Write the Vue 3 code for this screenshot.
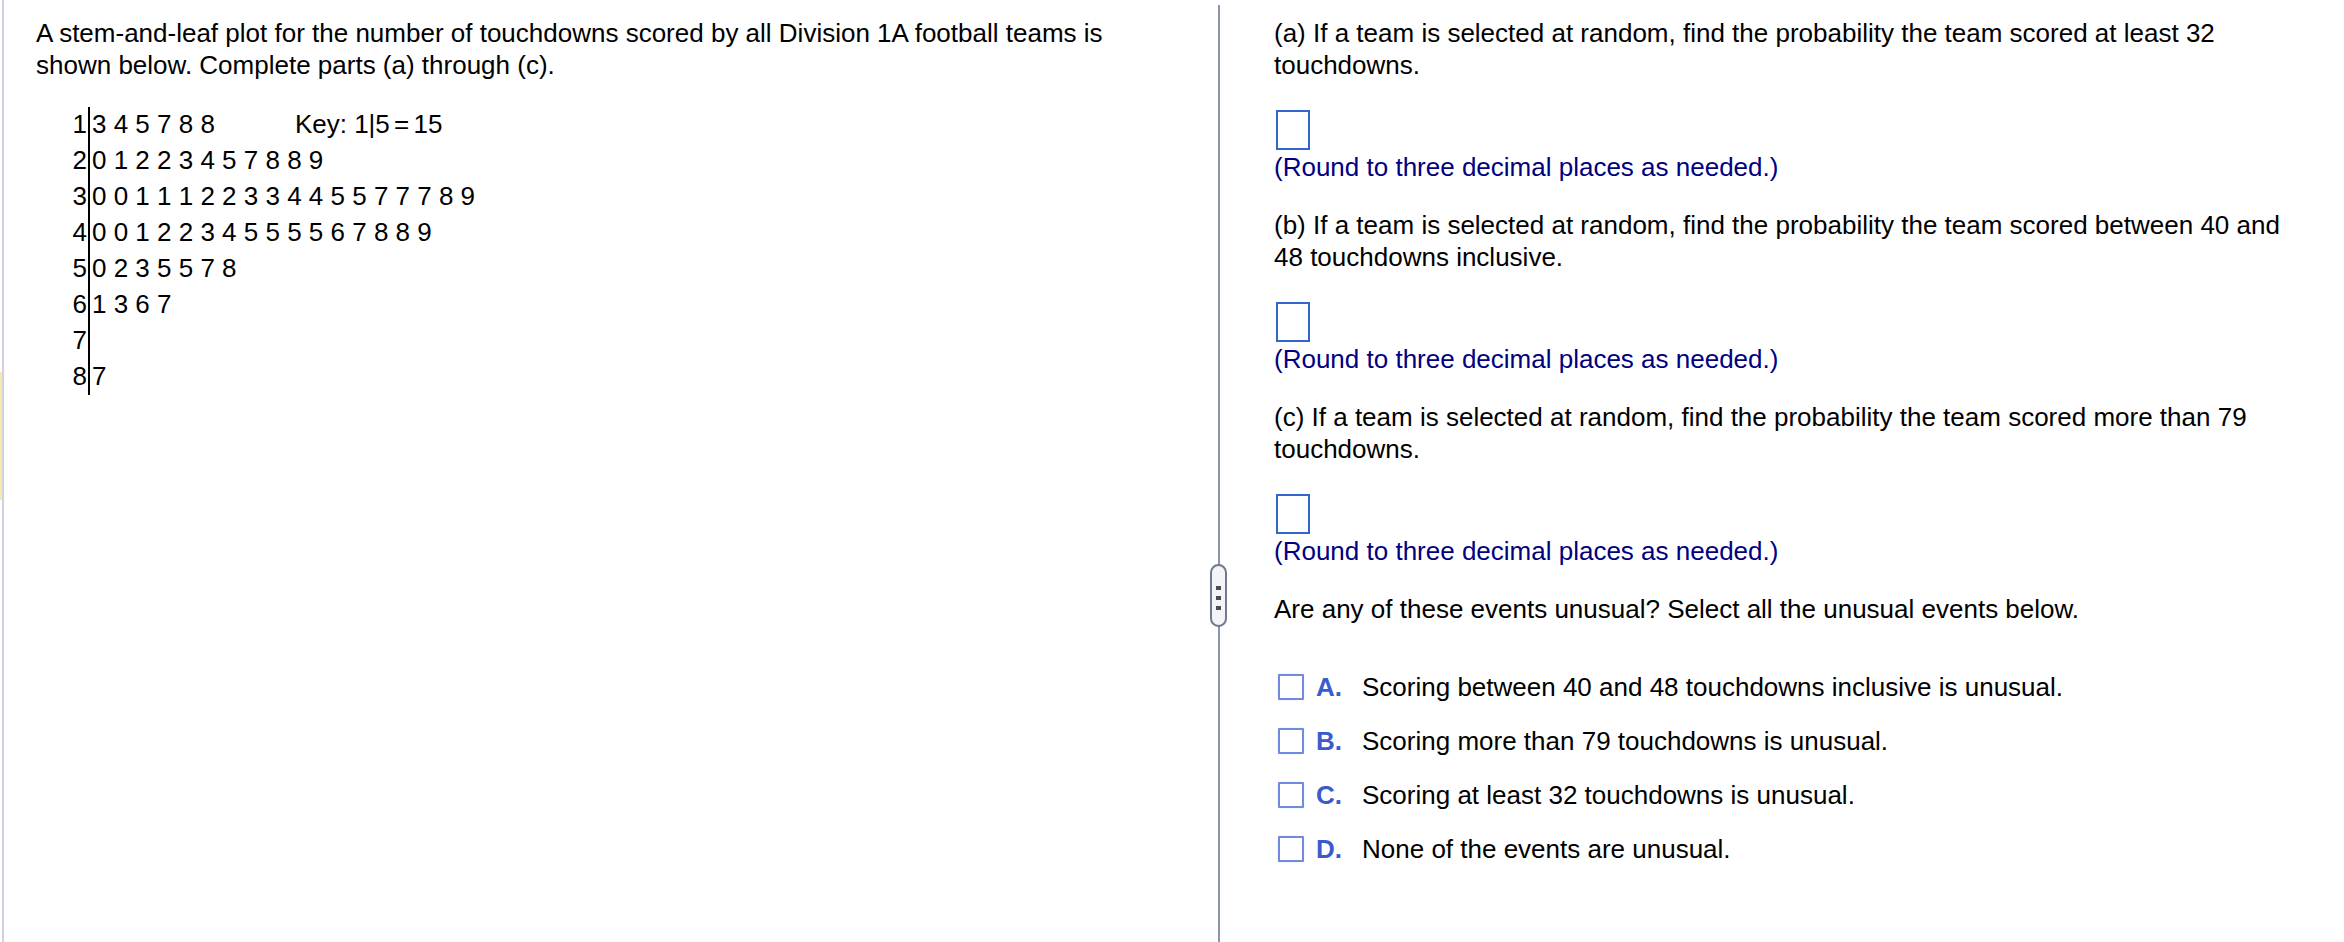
<template>
  <div class="page">
    <div class="rail"><div class="rail__mark"></div></div>
    <section class="pane pane--left">
      <p class="intro">
        A stem-and-leaf plot for the number of touchdowns scored by all Division 1A football teams is
        shown below. Complete parts (a) through (c).
      </p>
      <div class="plot">
        <div v-for="row in rows" :key="row.stem" class="plot__row">
          <span class="plot__stem">{{ row.stem }}</span>
          <span class="plot__leaves">{{ row.leaves }}</span>
          <span v-if="row.key" class="plot__key">Key: 1|5<span class="thin"> = </span>15</span>
        </div>
      </div>
    </section>
    <div class="divider">
      <div class="handle"><i></i><i></i><i></i></div>
    </div>
    <section class="pane pane--right">
      <div v-for="part in parts" :key="part" class="part">
        <p class="part__text">{{ part }}</p>
        <div class="answer"></div>
        <p class="note">(Round to three decimal places as needed.)</p>
      </div>
      <p class="question">Are any of these events unusual? Select all the unusual events below.</p>
      <ul class="options">
        <li v-for="opt in options" :key="opt.letter" class="option">
          <span class="option__box"></span>
          <span class="option__letter">{{ opt.letter }}.</span>
          <span>{{ opt.text }}</span>
        </li>
      </ul>
    </section>
  </div>
</template>

<script setup>
const rows = [
  { stem: 1, leaves: "3 4 5 7 8 8", key: true },
  { stem: 2, leaves: "0 1 2 2 3 4 5 7 8 8 9" },
  { stem: 3, leaves: "0 0 1 1 1 2 2 3 3 4 4 5 5 7 7 7 8 9" },
  { stem: 4, leaves: "0 0 1 2 2 3 4 5 5 5 5 6 7 8 8 9" },
  { stem: 5, leaves: "0 2 3 5 5 7 8" },
  { stem: 6, leaves: "1 3 6 7" },
  { stem: 7, leaves: "" },
  { stem: 8, leaves: "7" },
];

const parts = [
  "(a) If a team is selected at random, find the probability the team scored at least 32 touchdowns.",
  "(b) If a team is selected at random, find the probability the team scored between 40 and 48 touchdowns inclusive.",
  "(c) If a team is selected at random, find the probability the team scored more than 79 touchdowns.",
];

const options = [
  { letter: "A", text: "Scoring between 40 and 48 touchdowns inclusive is unusual." },
  { letter: "B", text: "Scoring more than 79 touchdowns is unusual." },
  { letter: "C", text: "Scoring at least 32 touchdowns is unusual." },
  { letter: "D", text: "None of the events are unusual." },
];
</script>

<style>
html,
body {
  margin: 0;
  background: #ffffff;
}
</style>

<style scoped>
.page {
  display: flex;
  height: 942px;
  overflow: hidden;
  font-family: "Liberation Sans", Arial, sans-serif;
  font-size: 26px;
  line-height: 32px;
  color: #000000;
}

p {
  margin: 0;
}

.rail {
  width: 4px;
  flex: none;
  box-sizing: border-box;
  border-right: 2px solid #cdd3e0;
  padding-top: 372px;
}

.rail__mark {
  height: 128px;
  background: #f9e7ae;
}

.pane--left {
  width: 1214px;
  flex: none;
  box-sizing: border-box;
  padding: 17px 64px 0 32px;
}

.intro {
  margin-bottom: 26px;
}

.plot {
  margin-left: 36px;
  width: max-content;
}

.plot__row {
  display: flex;
  height: 36px;
  line-height: 35px;
}

.plot__stem {
  width: 15px;
  padding-right: 1px;
  border-right: 2px solid #000000;
  margin-right: 2px;
  text-align: right;
}

.plot__key {
  margin-left: 80px;
}

.thin {
  word-spacing: -3px;
}

.divider {
  width: 2px;
  flex: none;
  margin-top: 5px;
  background: #8e95aa;
  position: relative;
}

.handle {
  position: absolute;
  left: -8px;
  top: 559px;
  width: 17px;
  height: 63px;
  box-sizing: border-box;
  padding-top: 4px;
  background: #f2f4f7;
  border: 2px solid #6d7a90;
  border-radius: 9px;
  display: flex;
  flex-direction: column;
  align-items: center;
  justify-content: center;
  gap: 6px;
}

.handle i {
  display: block;
  width: 5px;
  height: 4px;
  background: #4a4d55;
}

.pane--right {
  flex: 1;
  padding: 17px 44px 0 54px;
}

.part {
  margin-bottom: 26px;
}

.answer {
  width: 34px;
  height: 40px;
  box-sizing: border-box;
  border: 2px solid #3366cc;
  margin: 29px 0 0 2px;
}

.note {
  color: #000080;
  margin-top: 1px;
}

.options {
  list-style: none;
  margin: 35px 0 0;
  padding: 0;
}

.option {
  display: flex;
  align-items: center;
  height: 54px;
}

.option__box {
  width: 26px;
  height: 26px;
  box-sizing: border-box;
  border: 2px solid #718ae0;
  border-radius: 1px;
  box-shadow: 0 0 1px #a5b5ec;
  margin: 0 12px 0 4px;
}

.option__letter {
  width: 46px;
  font-weight: 700;
  color: #3a5bcd;
}
</style>
